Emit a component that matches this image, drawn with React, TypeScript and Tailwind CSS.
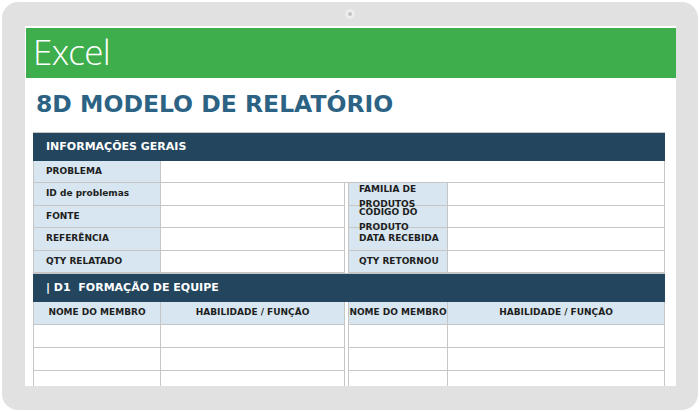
const label = "text-[9px] font-bold text-[#1e1e1e] whitespace-nowrap";
const cell = "h-full border-b border-r border-[#c6c6c6]";
const lab = "bg-[#d7e6f0]";

type InfoRow = { left: string; right?: React.ReactNode; h: string; wrapRight?: boolean };

const infoRows: InfoRow[] = [
  { left: "PROBLEMA", h: "h-[22px]" },
  {
    left: "ID de problemas",
    right: (
      <>
        FAMILIA DE
        <br />
        PRODUTOS
      </>
    ),
    h: "h-[23px]",
    wrapRight: true,
  },
  {
    left: "FONTE",
    right: (
      <>
        CÓDIGO DO
        <br />
        PRODUTO
      </>
    ),
    h: "h-[22px]",
    wrapRight: true,
  },
  { left: "REFERÊNCIA", right: "DATA RECEBIDA", h: "h-[23px]" },
  { left: "QTY RELATADO", right: "QTY RETORNOU", h: "h-[22px]" },
];

function SectionBar({ children, h }: { children: React.ReactNode; h: string }) {
  return (
    <div
      className={`${h} bg-[#23465e] border-t border-[#c6c6c6] flex items-center pl-[13px] text-white text-[11px] font-bold`}
    >
      {children}
    </div>
  );
}

function Row({ row }: { row: InfoRow }) {
  if (!row.right) {
    return (
      <div className={`${row.h} flex`}>
        <div className={`${cell} ${lab} w-[128px] border-l flex items-center pl-[12px] ${label}`}>{row.left}</div>
        <div className={`${cell} flex-1 bg-white`} />
      </div>
    );
  }
  return (
    <div className={`${row.h} flex`}>
      <div className={`${cell} ${lab} w-[128px] border-l flex items-center pl-[12px] ${label}`}>{row.left}</div>
      <div className={`${cell} w-[184px] bg-white`} />
      <div className="w-[3px] h-full bg-white" />
      <div
        className={`${cell} ${lab} w-[100px] border-l flex pl-[10px] ${label} ${
          row.wrapRight ? "items-start leading-[15px]" : "items-center"
        }`}
      >
        <span className={`relative z-10 ${row.wrapRight ? "-mt-[1px]" : ""}`}>{row.right}</span>
      </div>
      <div className={`${cell} flex-1 bg-white`} />
    </div>
  );
}

function MemberRow({ head, h }: { head?: boolean; h: string }) {
  const c = `${cell} ${head ? lab : "bg-white"} flex items-center justify-center ${label}`;
  return (
    <div className={`${h} flex`}>
      <div className={`${c} w-[128px] border-l`}>{head ? "NOME DO MEMBRO" : ""}</div>
      <div className={`${c} w-[184px]`}>{head ? "HABILIDADE / FUNÇÃO" : ""}</div>
      <div className="w-[3px] h-full bg-white" />
      <div className={`${c} w-[100px] border-l`}>{head ? "NOME DO MEMBRO" : ""}</div>
      <div className={`${c} flex-1`}>{head ? "HABILIDADE / FUNÇÃO" : ""}</div>
    </div>
  );
}

export default function App() {
  return (
    <div className="w-[700px] h-[412px] bg-white p-[2px] font-['DejaVu_Sans',sans-serif]">
      <div className="h-full rounded-[16px] bg-[#e1e1e1] flex flex-col">
        <div className="h-[24px] flex items-center justify-center">
          <div className="w-[10px] h-[10px] rounded-full bg-[#ececec] flex items-center justify-center">
            <div className="w-[4px] h-[4px] rounded-full bg-[#c4c4c4]" />
          </div>
        </div>
        <div className="flex-1 ml-[23px] mr-[22px] mb-[24px] bg-white pt-[2px] pl-[1px] overflow-hidden flex flex-col">
          <div className="h-[50px] shrink-0 bg-[#3dae4b] flex items-center pl-[7px]">
            <span className="text-white text-[35px] font-light font-['Open_Sans',sans-serif] leading-none -mt-[3px] tracking-[-0.02em]">
              Excel
            </span>
          </div>
          <div className="h-[54px] shrink-0 flex items-center pl-[10px]">
            <h1 className="text-[23.5px] font-bold text-[#2c6384] leading-none">8D MODELO DE RELATÓRIO</h1>
          </div>
          <div className="ml-[7px] w-[632px] shrink-0">
            <SectionBar h="h-[29px]">INFORMAÇÕES GERAIS</SectionBar>
            {infoRows.map((r) => (
              <Row key={r.left} row={r} />
            ))}
            <SectionBar h="h-[29px]">| D1&nbsp; FORMAÇÃO DE EQUIPE</SectionBar>
            <MemberRow head h="h-[23px]" />
            <MemberRow h="h-[23px]" />
            <MemberRow h="h-[23px]" />
            <MemberRow h="h-[23px]" />
          </div>
        </div>
      </div>
    </div>
  );
}
